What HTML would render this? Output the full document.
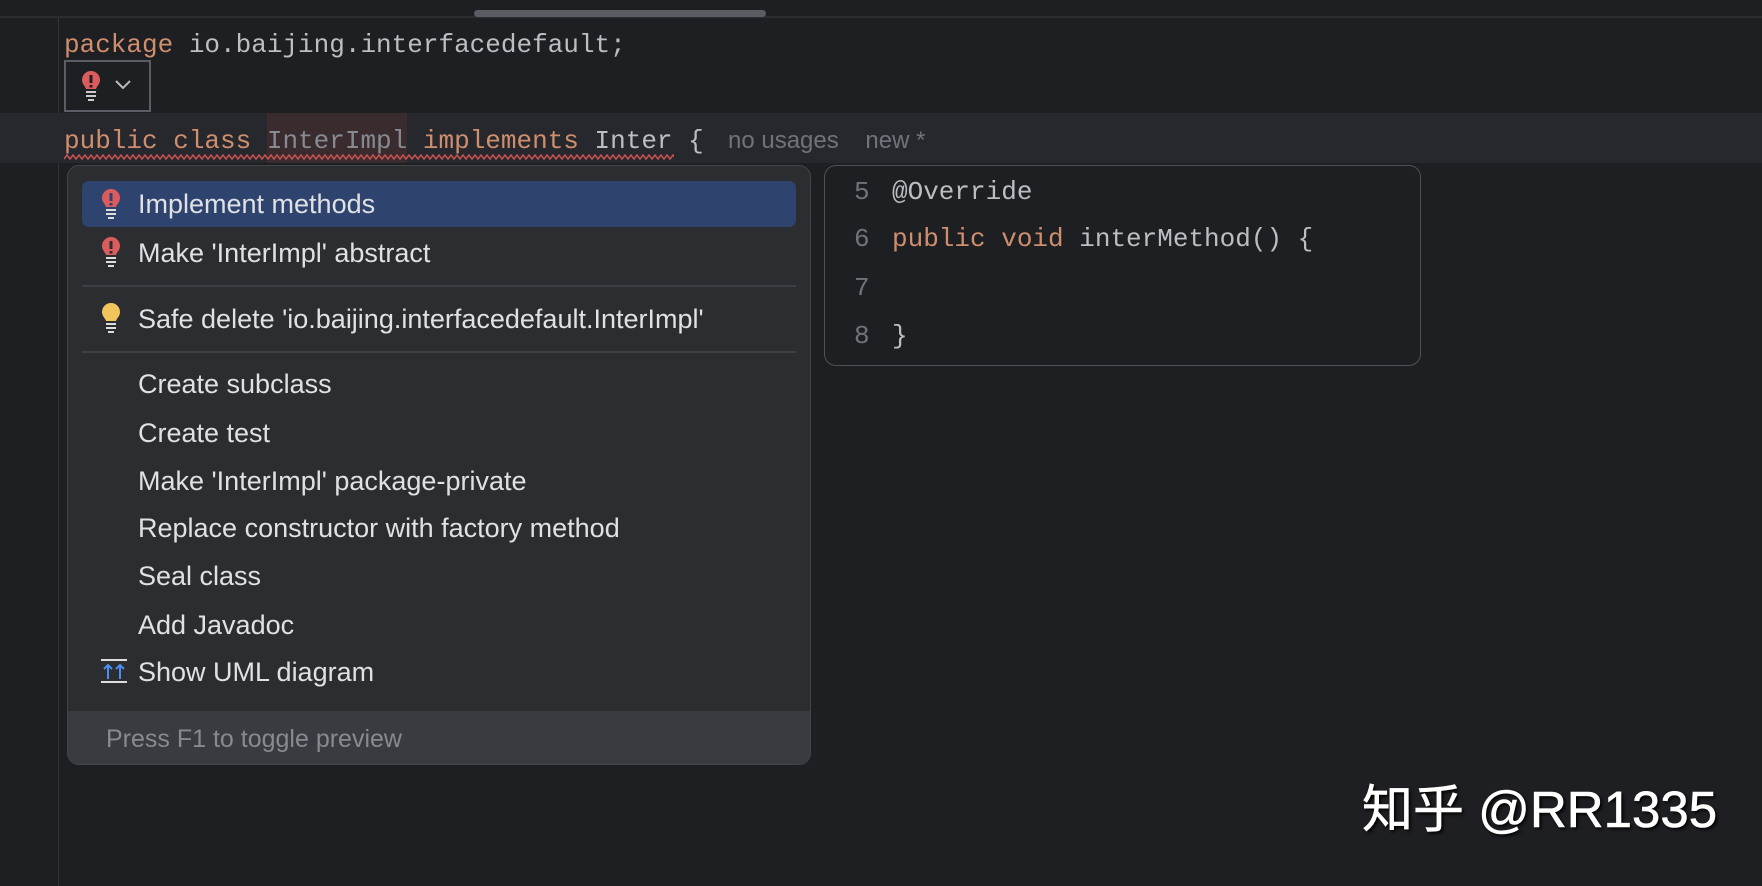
<!DOCTYPE html>
<html><head><meta charset="utf-8"><style>
*{margin:0;padding:0;box-sizing:border-box}
body{width:1762px;height:886px;background:#1e1f22;position:relative;overflow:hidden;font-family:"Liberation Sans",sans-serif}
.mono{font-family:"Liberation Mono",monospace;font-size:26px;position:absolute;white-space:pre;color:#bcbec4;line-height:30px}
.kw{color:#cf8e6d}
.a{position:absolute}
.item{position:absolute;left:138px;font-size:27px;color:#dfe1e5;line-height:30px;white-space:pre}
.ic{position:absolute;left:100px}
</style></head><body>
<div class="a" style="left:0;top:16px;width:1762px;height:2px;background:#2b2d30"></div>
<div class="a" style="left:474px;top:10px;width:292px;height:7px;border-radius:4px;background:#5a5d63"></div>
<div class="a" style="left:58px;top:18px;width:1px;height:868px;background:#313338"></div>
<div class="mono" style="left:64px;top:30px"><span class="kw">package</span> io.baijing.interfacedefault;</div>
<div class="a" style="left:64px;top:60px;width:87px;height:52px;border:2px solid #5a5d63"></div>
<svg class="a" style="left:80px;top:70px" width="22" height="32" viewBox="0 0 22 32"><path d="M11 1a9 9 0 0 0-9 9c0 4 3 6 4 9h10c1-3 4-5 4-9a9 9 0 0 0-9-9z" fill="#db5c5c"/><rect x="9.5" y="5" width="3" height="8" fill="#1e1f22"/><rect x="9.5" y="15" width="3" height="2.5" fill="#1e1f22"/><rect x="6" y="21" width="10" height="2" fill="#ccc"/><rect x="6" y="25" width="10" height="2" fill="#ccc"/><rect x="8" y="29" width="6" height="2" fill="#ccc"/></svg>
<svg class="a" style="left:115px;top:80px" width="16" height="10"><path d="M1 1l7 7 7-7" stroke="#bbb" stroke-width="2" fill="none"/></svg>
<div class="a" style="left:0;top:113px;width:1762px;height:50px;background:#26282e"></div>
<div class="a" style="left:267px;top:113px;width:140px;height:50px;background:#3a2b2e"></div>
<div class="mono" style="left:64px;top:126px"><span class="kw">public class </span><span style="color:#868a91">InterImpl</span><span class="kw"> implements </span>Inter {</div>
<svg class="a" style="left:64px;top:154px" width="610" height="6"><path d="M0 5 l3 -4 l3 4 l3 -4 l3 4 l3 -4 l3 4 l3 -4 l3 4 l3 -4 l3 4 l3 -4 l3 4 l3 -4 l3 4 l3 -4 l3 4 l3 -4 l3 4 l3 -4 l3 4 l3 -4 l3 4 l3 -4 l3 4 l3 -4 l3 4 l3 -4 l3 4 l3 -4 l3 4 l3 -4 l3 4 l3 -4 l3 4 l3 -4 l3 4 l3 -4 l3 4 l3 -4 l3 4 l3 -4 l3 4 l3 -4 l3 4 l3 -4 l3 4 l3 -4 l3 4 l3 -4 l3 4 l3 -4 l3 4 l3 -4 l3 4 l3 -4 l3 4 l3 -4 l3 4 l3 -4 l3 4 l3 -4 l3 4 l3 -4 l3 4 l3 -4 l3 4 l3 -4 l3 4 l3 -4 l3 4 l3 -4 l3 4 l3 -4 l3 4 l3 -4 l3 4 l3 -4 l3 4 l3 -4 l3 4 l3 -4 l3 4 l3 -4 l3 4 l3 -4 l3 4 l3 -4 l3 4 l3 -4 l3 4 l3 -4 l3 4 l3 -4 l3 4 l3 -4 l3 4 l3 -4 l3 4 l3 -4 l3 4 l3 -4 l3 4 l3 -4 l3 4 l3 -4 l3 4 l3 -4 l3 4 l3 -4 l3 4 l3 -4 l3 4 l3 -4 l3 4 l3 -4 l3 4 l3 -4 l3 4 l3 -4 l3 4 l3 -4 l3 4 l3 -4 l3 4 l3 -4 l3 4 l3 -4 l3 4 l3 -4 l3 4 l3 -4 l3 4 l3 -4 l3 4 l3 -4 l3 4 l3 -4 l3 4 l3 -4 l3 4 l3 -4 l3 4 l3 -4 l3 4 l3 -4 l3 4 l3 -4 l3 4 l3 -4 l3 4 l3 -4 l3 4 l3 -4 l3 4 l3 -4 l3 4 l3 -4 l3 4 l3 -4 l3 4 l3 -4 l3 4 l3 -4 l3 4 l3 -4 l3 4 l3 -4 l3 4 l3 -4 l3 4 l3 -4 l3 4 l3 -4 l3 4 l3 -4 l3 4 l3 -4 l3 4 l3 -4 l3 4 l3 -4 l3 4 l3 -4 l3 4 l3 -4 l3 4 l3 -4 l3 4 l3 -4 l3 4 l3 -4 l3 4 l3 -4 l3 4 l3 -4 l3 4 l3 -4 l3 4 l3 -4 l3 4 l3 -4 l3 4 l3 -4 l3 4 l3 -4 l3 4 l3 -4 l3 4" stroke="#c75450" stroke-width="1.5" fill="none"/></svg>
<div class="a" style="left:728px;top:127px;font-size:24px;color:#6f737a;white-space:pre">no usages    new *</div>

<div class="a" style="left:67px;top:165px;width:744px;height:600px;background:#2b2d30;border:1.5px solid #43454a;border-radius:12px;overflow:hidden">
<div class="a" style="left:0;top:545px;width:744px;height:60px;background:#393b40"></div>
<div class="a" style="left:38px;top:559px;font-size:25px;color:#868a91">Press F1 to toggle preview</div>
</div>
<div class="a" style="left:82px;top:181px;width:714px;height:46px;background:#2e436e;border-radius:7px"></div>
<div class="a" style="left:82px;top:285px;width:714px;height:1.5px;background:#3d3f44"></div>
<div class="a" style="left:82px;top:351px;width:714px;height:1.5px;background:#3d3f44"></div>

<svg class="ic" style="top:188px" width="22" height="32" viewBox="0 0 22 32"><path d="M11 1a9 9 0 0 0-9 9c0 4 3 6 4 9h10c1-3 4-5 4-9a9 9 0 0 0-9-9z" fill="#db5c5c"/><rect x="9.5" y="5" width="3" height="8" fill="#2e436e"/><rect x="9.5" y="15" width="3" height="2.5" fill="#2e436e"/><rect x="6" y="21" width="10" height="2" fill="#ddd"/><rect x="6" y="25" width="10" height="2" fill="#ddd"/><rect x="8" y="29" width="6" height="2" fill="#ddd"/></svg>
<svg class="ic" style="top:236px" width="22" height="32" viewBox="0 0 22 32"><path d="M11 1a9 9 0 0 0-9 9c0 4 3 6 4 9h10c1-3 4-5 4-9a9 9 0 0 0-9-9z" fill="#db5c5c"/><rect x="9.5" y="5" width="3" height="8" fill="#2b2d30"/><rect x="9.5" y="15" width="3" height="2.5" fill="#2b2d30"/><rect x="6" y="21" width="10" height="2" fill="#ddd"/><rect x="6" y="25" width="10" height="2" fill="#ddd"/><rect x="8" y="29" width="6" height="2" fill="#ddd"/></svg>
<svg class="ic" style="top:302px" width="22" height="32" viewBox="0 0 22 32"><path d="M11 1a9 9 0 0 0-9 9c0 4 3 6 4 9h10c1-3 4-5 4-9a9 9 0 0 0-9-9z" fill="#f2c55c"/><rect x="6" y="21" width="10" height="2" fill="#ddd"/><rect x="6" y="25" width="10" height="2" fill="#ddd"/><rect x="8" y="29" width="6" height="2" fill="#ddd"/></svg>
<svg class="ic" style="top:658px" width="28" height="26" viewBox="0 0 28 26"><rect x="1" y="1" width="26" height="2" fill="#ddd"/><rect x="1" y="23" width="26" height="2" fill="#ddd"/><path d="M8 21V7M4 11l4-4 4 4M20 21V7M16 11l4-4 4 4" stroke="#4c8df0" stroke-width="2" fill="none"/></svg>

<div class="item" style="top:189px">Implement methods</div>
<div class="item" style="top:238px">Make 'InterImpl' abstract</div>
<div class="item" style="top:304px">Safe delete 'io.baijing.interfacedefault.InterImpl'</div>
<div class="item" style="top:369px">Create subclass</div>
<div class="item" style="top:418px">Create test</div>
<div class="item" style="top:466px">Make 'InterImpl' package-private</div>
<div class="item" style="top:513px">Replace constructor with factory method</div>
<div class="item" style="top:561px">Seal class</div>
<div class="item" style="top:610px">Add Javadoc</div>
<div class="item" style="top:657px">Show UML diagram</div>

<div class="a" style="left:824px;top:165px;width:597px;height:201px;background:#1e1f22;border:1.5px solid #4e5157;border-radius:12px"></div>
<div class="mono" style="left:854px;top:177px;color:#6f737a">5</div>
<div class="mono" style="left:854px;top:224px;color:#6f737a">6</div>
<div class="mono" style="left:854px;top:273px;color:#6f737a">7</div>
<div class="mono" style="left:854px;top:321px;color:#6f737a">8</div>
<div class="mono" style="left:892px;top:177px;color:#bcbec4">@Override</div>
<div class="mono" style="left:892px;top:224px"><span class="kw">public void </span>interMethod() {</div>
<div class="mono" style="left:892px;top:321px">}</div>

<div class="a" style="left:1362px;top:780px;font-family:'Liberation Sans','Noto Sans CJK SC',sans-serif;font-size:51px;color:#fff;white-space:pre;text-shadow:2px 2px 3px #000;line-height:60px;-webkit-text-stroke:0.6px #fff">知乎 @RR1335</div>
</body></html>
